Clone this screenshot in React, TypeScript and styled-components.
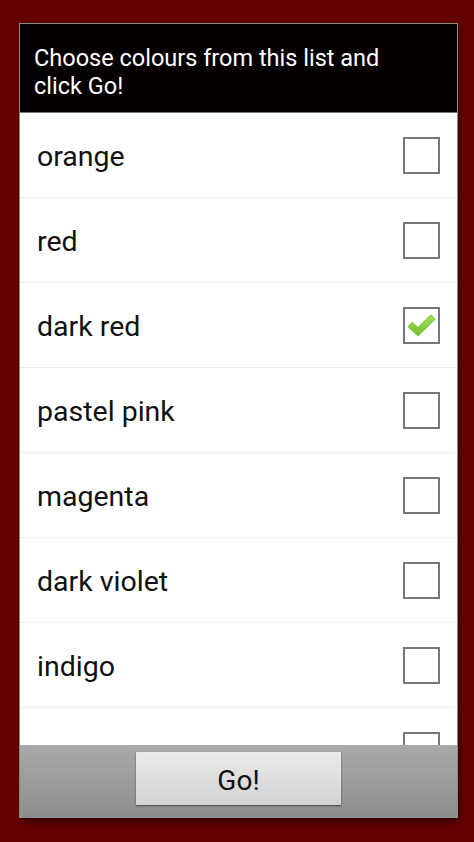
import React from 'react';
import styled, { createGlobalStyle } from 'styled-components';

const GlobalStyle = createGlobalStyle`
    html, body {
        margin: 0;
        padding: 0;
        height: 100%;
        background: #640000;
        font-family: Roboto, "Noto Sans", "Liberation Sans", sans-serif;
    }
    #root {
        height: 100%;
    }
`;

const Screen = styled.div`
    box-sizing: border-box;
    height: 842px;
    padding: 23px 16px 24px 19px;
    background: #640000;
`;

const Dialog = styled.div`
    box-sizing: border-box;
    width: 439px;
    height: 795px;
    display: flex;
    flex-direction: column;
    border: 1px solid #8a8a8a;
    background: #ffffff;
    box-shadow: 2px 4px 6px rgba(0, 0, 0, 0.45);
    overflow: hidden;
`;

const Header = styled.div`
    flex: 0 0 89px;
    box-sizing: border-box;
    background: #050000;
    color: #ffffff;
    font-size: 23.5px;
    line-height: 28px;
    padding: 20px 44px 0 14px;
    border-bottom: 1px solid #777;
`;

const List = styled.div`
    flex: 1;
    overflow: hidden;
`;

const Row = styled.div`
    box-sizing: border-box;
    height: 85px;
    display: flex;
    align-items: center;
    justify-content: space-between;
    padding: 3px 17px 0 17px;
    border-bottom: 1px solid #ececec;
`;

const Label = styled.span`
    font-size: 28.5px;
    color: #111;
`;

const CheckBox = styled.div`
    box-sizing: border-box;
    width: 37px;
    height: 37px;
    margin-top: -3px;
    border: 2px solid #777;
    display: flex;
    align-items: center;
    justify-content: center;
    background: #fff;
`;

const Footer = styled.div`
    flex: 0 0 72px;
    box-sizing: border-box;
    display: flex;
    justify-content: center;
    align-items: flex-start;
    padding-top: 7px;
    background: linear-gradient(#a9a9a9, #8e8e8e);
`;

const GoButton = styled.button`
    width: 205px;
    height: 53px;
    border: none;
    border-radius: 1px;
    background: linear-gradient(#ebebeb, #d2d2d2);
    box-shadow: 0 1px 2px rgba(0, 0, 0, 0.55);
    font-family: Roboto, "Noto Sans", "Liberation Sans", sans-serif;
    font-size: 28px;
    color: #111;
    padding: 3px 0 0 0;
`;

const Tick = () => (
    <svg width="31" height="27" viewBox="0 0 30 26">
        <defs>
            <linearGradient id="tickGrad" x1="0" y1="0" x2="0" y2="1">
                <stop offset="0" stopColor="#a6e05a" />
                <stop offset="1" stopColor="#6cbd2b" />
            </linearGradient>
        </defs>
        <path
            d="M2 14 L6 10 L11.5 15 L24 3 L28 7 L11.5 23 Z"
            fill="url(#tickGrad)"
            stroke="#7cc83a"
            strokeWidth="1"
            strokeLinejoin="round"
        />
    </svg>
);

// the last row sits under the footer; only its checkbox top shows
const colours: { name: string; checked: boolean }[] = [
    { name: 'orange', checked: false },
    { name: 'red', checked: false },
    { name: 'dark red', checked: true },
    { name: 'pastel pink', checked: false },
    { name: 'magenta', checked: false },
    { name: 'dark violet', checked: false },
    { name: 'indigo', checked: false },
    { name: '', checked: false },
];

export default function App() {
    return (
        <>
            <GlobalStyle />
            <Screen>
                <Dialog>
                    <Header>Choose colours from this list and click Go!</Header>
                    <List>
                        {colours.map((colour, i) => (
                            <Row key={i}>
                                <Label>{colour.name}</Label>
                                <CheckBox>{colour.checked && <Tick />}</CheckBox>
                            </Row>
                        ))}
                    </List>
                    <Footer>
                        <GoButton>Go!</GoButton>
                    </Footer>
                </Dialog>
            </Screen>
        </>
    );
}
